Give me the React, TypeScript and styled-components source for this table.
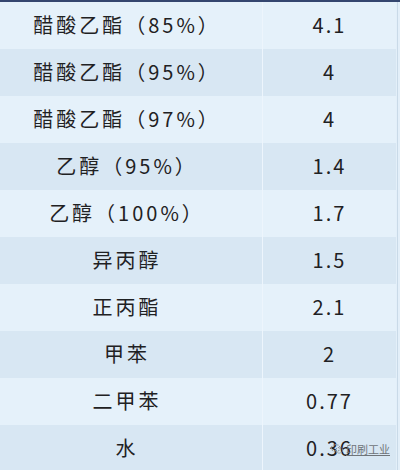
import React from 'react';
import styled, { createGlobalStyle } from 'styled-components';

const GlobalStyle = createGlobalStyle`
  html, body {
    margin: 0;
    padding: 0;
    background: #e3eff9;
  }
  body {
    font-family: "Noto Sans CJK SC", "Noto Sans", sans-serif;
  }
`;

const Frame = styled.div`
  position: relative;
  width: 400px;
  height: 470px;
  overflow: hidden;
  background: #e3eff9;
  border-top: 2px solid #34466f;
  box-sizing: border-box;
`;

const Table = styled.div`
  display: grid;
  grid-template-columns: 262px 134px;
  border-right: 1px solid #c9dae8;
  width: 397px;
`;

const Cell = styled.div<{ $shade: boolean; $right?: boolean }>`
  height: 47px;
  box-sizing: border-box;
  padding-bottom: 3px;
  display: flex;
  align-items: center;
  justify-content: center;
  background: ${(p) => (p.$shade ? '#d8e7f3' : '#e5f1fa')};
  border-left: ${(p) => (p.$right ? '1px solid #edf5fc' : 'none')};
  color: #1f2123;
  font-size: 20px;
  letter-spacing: ${(p) => (p.$right ? '2px' : '3px')};
  padding-right: ${(p) => (p.$right ? '0' : '8px')};
  white-space: nowrap;
`;

const Watermark = styled.div`
  position: absolute;
  right: 10px;
  bottom: 13px;
  display: flex;
  align-items: center;
  gap: 2px;
  color: #6f7479;
  font-size: 11px;
  svg {
    width: 14px;
    height: 14px;
  }
  span {
    text-decoration: underline;
    letter-spacing: 0;
  }
`;

const rows: [string, string][] = [
  ['醋酸乙酯（85%）', '4.1'],
  ['醋酸乙酯（95%）', '4'],
  ['醋酸乙酯（97%）', '4'],
  ['乙醇（95%）', '1.4'],
  ['乙醇（100%）', '1.7'],
  ['异丙醇', '1.5'],
  ['正丙酯', '2.1'],
  ['甲苯', '2'],
  ['二甲苯', '0.77'],
  ['水', '0.36'],
];

export default function App() {
  return (
    <>
      <GlobalStyle />
      <Frame>
        <Table>
          {rows.map(([name, value], i) => (
            <React.Fragment key={name}>
              <Cell $shade={i % 2 === 1}>{name}</Cell>
              <Cell $shade={i % 2 === 1} $right>
                {value}
              </Cell>
            </React.Fragment>
          ))}
        </Table>
        <Watermark>
          <svg viewBox="0 0 16 16" fill="none" stroke="#8a8f94" strokeWidth="1.2">
            <ellipse cx="6.5" cy="7" rx="5" ry="4" strokeDasharray="1.5 1" />
            <ellipse cx="10.5" cy="9.5" rx="4" ry="3.2" strokeDasharray="1.5 1" />
          </svg>
          <span>印刷工业</span>
        </Watermark>
      </Frame>
    </>
  );
}
